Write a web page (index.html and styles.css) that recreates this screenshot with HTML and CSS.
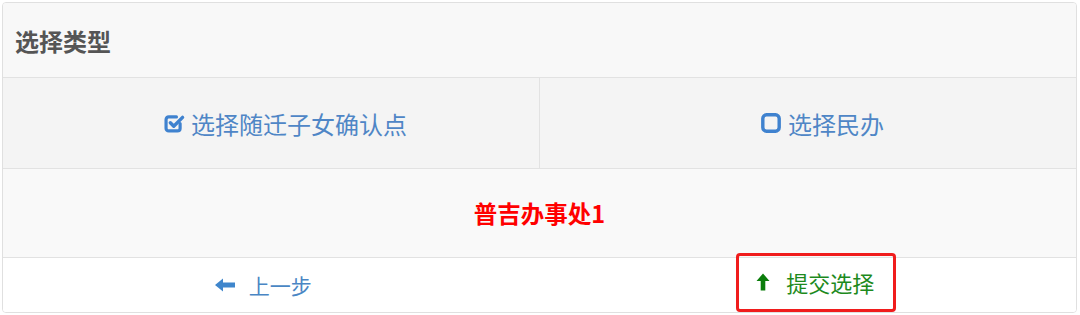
FILE: index.html
```html
<!DOCTYPE html>
<html lang="zh">
<head>
<meta charset="utf-8">
<link rel="stylesheet" href="styles.css">
</head>
<body>
<div class="wrap">
  <div class="panel">
    <div class="panel-heading">选择类型</div>
    <div class="choice-row">
      <div class="choice choice-left">
        <svg class="ico" viewBox="0 0 18 18" width="22" height="22">
          <path d="M14 9.5V13.2Q14 15.5 11.7 15.5H4.8Q2.5 15.5 2.5 13.2V6.3Q2.5 4 4.8 4H11" fill="none" stroke="#3f82cf" stroke-width="2.6" stroke-linecap="round"/>
          <path d="M6 8.8L8.8 11.6L16 4.4" fill="none" stroke="#3f82cf" stroke-width="2.8" stroke-linecap="round" stroke-linejoin="round"/>
        </svg>
        <span>选择随迁子女确认点</span>
      </div>
      <div class="choice choice-right">
        <svg class="ico" viewBox="0 0 18 18" width="22" height="22">
          <rect x="2.3" y="2.3" width="13.4" height="13.4" rx="3" ry="3" fill="none" stroke="#3f82cf" stroke-width="2.8"/>
        </svg>
        <span>选择民办</span>
      </div>
    </div>
    <div class="office-row">普吉办事处1</div>
    <div class="action-row">
      <div class="action action-left">
        <a class="btn btn-prev">
          <svg viewBox="0 0 22 16" width="22" height="16">
            <path d="M1 8L9 1.5V5.5H21V10.5H9V14.5Z" fill="#3f86cc"/>
          </svg>
          <span>上一步</span>
        </a>
      </div>
      <div class="action action-right">
        <a class="btn btn-submit">
          <svg viewBox="0 0 14 18" width="14" height="18">
            <path d="M7 0.5L13.5 8H9.3V17.5H4.7V8H0.5Z" fill="#0b7d0b"/>
          </svg>
          <span>提交选择</span>
        </a>
      </div>
    </div>
  </div>
</div>
</body>
</html>
```
FILE: styles.css
```css
html, body {
  margin: 0;
  padding: 0;
  background: #ffffff;
}
body {
  font-family: "Microsoft YaHei", "Noto Sans CJK SC", "Noto Sans", sans-serif;
}
.wrap {
  padding: 2px 3px 2px 2px;
}
.panel {
  border: 1px solid #e0e0e0;
  border-radius: 4px;
  overflow: hidden;
  width: 1073px;
}
.panel-heading {
  height: 74px;
  background: #f8f8f8;
  border-bottom: 1px solid #e2e2e2;
  display: flex;
  align-items: center;
  padding-left: 12px;
  font-size: 24px;
  font-weight: bold;
  color: #555555;
}
.choice-row {
  display: flex;
  height: 90px;
  background: #f4f4f4;
  border-bottom: 1px solid #e2e2e2;
}
.choice {
  display: flex;
  align-items: center;
  justify-content: center;
  gap: 6px;
  font-size: 24px;
  color: #4f86c6;
}
.choice-left {
  width: 537px;
  border-right: 1px solid #e2e2e2;
  padding-left: 28px;
  box-sizing: border-box;
}
.choice-right {
  flex: 1;
  padding-left: 28px;
}
.ico {
  display: block;
  flex: none;
}
.office-row {
  height: 88px;
  background: #f9f9f9;
  border-bottom: 1px solid #e2e2e2;
  display: flex;
  align-items: center;
  justify-content: center;
  font-size: 23.5px;
  font-weight: bold;
  color: #ff0000;
}
.action-row {
  display: flex;
  height: 54px;
  background: #ffffff;
}
.action {
  flex: 1;
  display: flex;
  align-items: center;
  justify-content: center;
}
.action-left {
  padding-right: 18px;
}
.action-right {
  padding-left: 16px;
}
.btn {
  display: flex;
  align-items: center;
  font-size: 21px;
  cursor: pointer;
}
.btn-prev {
  gap: 13px;
  color: #4a86c4;
}
.btn-submit {
  gap: 16px;
  font-size: 22px;
  color: #1d8a1d;
  border: 3px solid #f01c1c;
  border-radius: 4px;
  width: 160px;
  height: 59px;
  box-sizing: border-box;
  justify-content: center;
  margin-top: -6px;
  padding-right: 2px;
}
```
